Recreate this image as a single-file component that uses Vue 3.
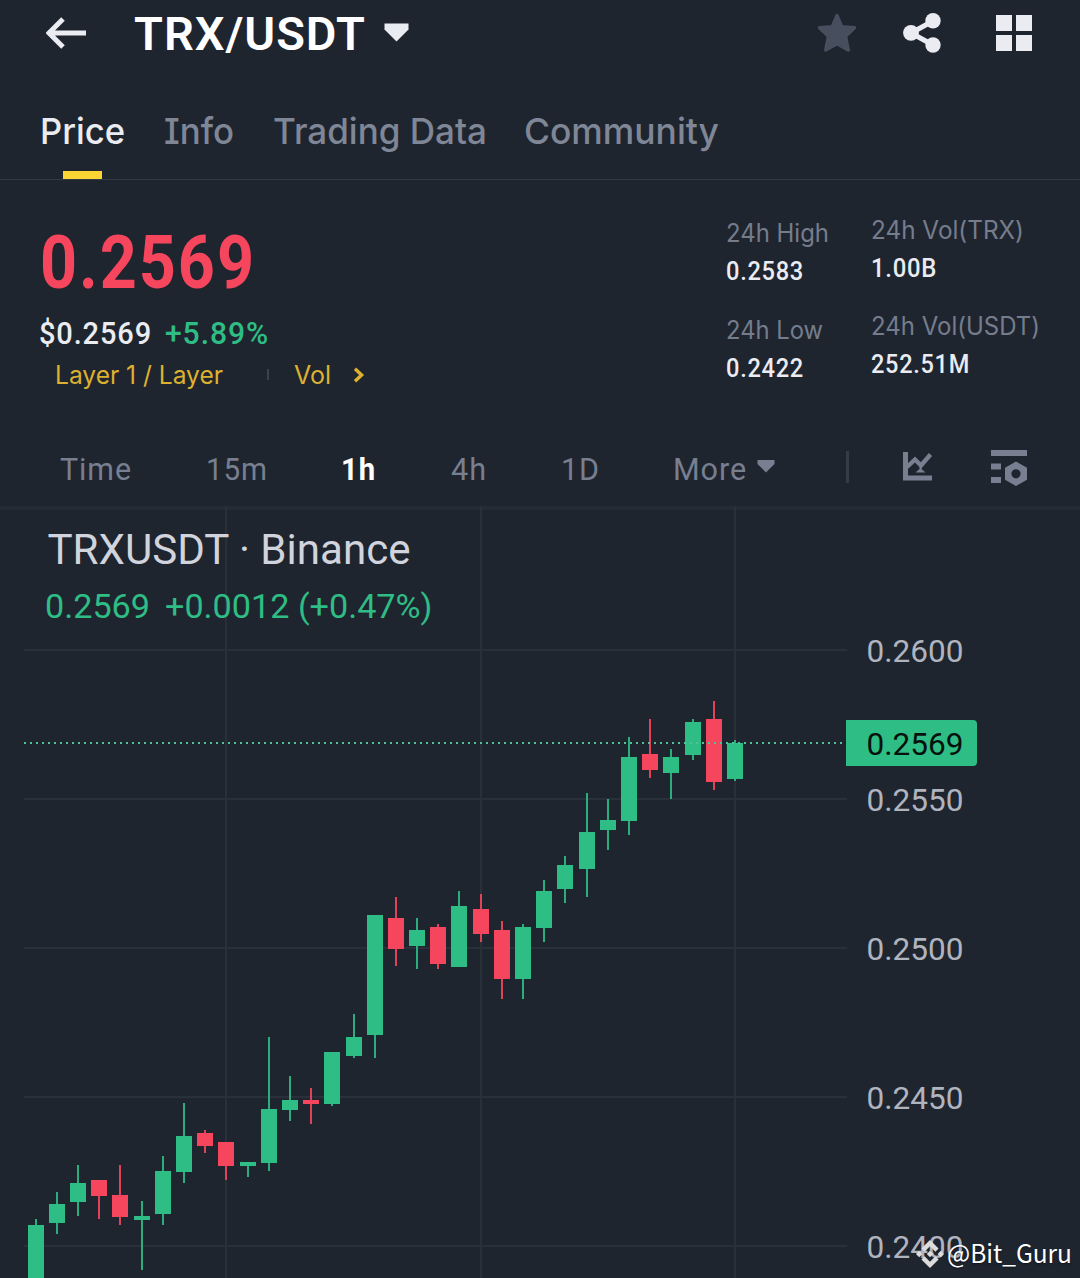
<script setup>
const tabs = [
  { label: 'Price', width: 85, gap: 0, active: true },
  { label: 'Info', width: 70, gap: 39, active: false },
  { label: 'Trading Data', width: 214, gap: 39, active: false },
  { label: 'Community', width: 195, gap: 37, active: false },
]

const stats = [
  [
    { label: '24h High', labelWidth: 103, value: '0.2583', valueWidth: 78 },
    { label: '24h Low', labelWidth: 97, value: '0.2422', valueWidth: 78 },
  ],
  [
    { label: '24h Vol(TRX)', labelWidth: 153, value: '1.00B', valueWidth: 66 },
    { label: '24h Vol(USDT)', labelWidth: 169, value: '252.51M', valueWidth: 99 },
  ],
]

const intervals = [
  { label: 'Time', width: 72, gap: 0 },
  { label: '15m', width: 62, gap: 74 },
  { label: '1h', width: 35, gap: 73 },
  { label: '4h', width: 36, gap: 75 },
  { label: '1D', width: 39, gap: 74 },
  { label: 'More', width: 74, gap: 73 },
].map((item) => ({ ...item, active: item.label === '1h' }))

const levels = [
  { y: 651, label: '0.2600' },
  { y: 800, label: '0.2550' },
  { y: 949, label: '0.2500' },
  { y: 1098, label: '0.2450' },
  { y: 1247, label: '0.2400' },
]
const columns = [226, 481, 735]

// x centre, wick top, body top, body bottom, wick bottom, direction
const candles = [
  [36, 1219, 1225, 1280, 1280, 'up'],
  [57, 1192, 1204, 1223, 1234, 'up'],
  [78, 1165, 1183, 1202, 1216, 'up'],
  [99, 1180, 1180, 1196, 1219, 'down'],
  [120, 1165, 1195, 1217, 1225, 'down'],
  [142, 1201, 1216, 1220, 1270, 'up'],
  [163, 1156, 1171, 1214, 1225, 'up'],
  [184, 1103, 1136, 1172, 1183, 'up'],
  [205, 1130, 1133, 1146, 1153, 'down'],
  [226, 1142, 1142, 1166, 1180, 'down'],
  [248, 1162, 1162, 1166, 1177, 'up'],
  [269, 1037, 1109, 1163, 1171, 'up'],
  [290, 1076, 1100, 1110, 1121, 'up'],
  [311, 1088, 1100, 1104, 1124, 'down'],
  [332, 1052, 1052, 1104, 1106, 'up'],
  [354, 1014, 1037, 1056, 1058, 'up'],
  [375, 915, 915, 1035, 1058, 'up'],
  [396, 897, 918, 949, 966, 'down'],
  [417, 918, 930, 946, 969, 'up'],
  [438, 924, 927, 964, 969, 'down'],
  [459, 891, 906, 967, 967, 'up'],
  [481, 894, 909, 934, 942, 'down'],
  [502, 921, 930, 979, 999, 'down'],
  [523, 924, 927, 979, 999, 'up'],
  [544, 880, 891, 928, 942, 'up'],
  [565, 856, 865, 889, 903, 'up'],
  [587, 793, 832, 869, 897, 'up'],
  [608, 799, 820, 830, 850, 'up'],
  [629, 737, 757, 821, 835, 'up'],
  [650, 719, 754, 770, 778, 'down'],
  [671, 749, 757, 773, 799, 'up'],
  [693, 719, 722, 755, 760, 'up'],
  [714, 701, 719, 782, 790, 'down'],
  [735, 740, 743, 779, 781, 'up'],
]

// Condenses or widens a label so that it fills the given width.
const vFit = {
  mounted(el, { value }) {
    const natural = el.getBoundingClientRect().width
    el.style.width = `${value}px`
    el.style.transform = `scaleX(${value / natural})`
  },
}
</script>

<template>
  <main class="screen">
    <header class="header">
      <svg class="back" width="40" height="32" viewBox="0 0 40 32">
        <path d="M40 16H4M17 2 3 16l14 14" fill="none" stroke="currentColor" stroke-width="5" />
      </svg>
      <h1 class="pair"><span v-fit="232" class="fit">TRX/USDT</span></h1>
      <svg class="caret" width="25" height="20" viewBox="0 0 25 20">
        <path d="M.5 .5h24v6L12.500 18.500 .5 6.500z" fill="currentColor" />
      </svg>
      <svg class="star" width="40" height="42" viewBox="0 0 40 42">
        <path
          d="M20 3.500 24.700 14.600 37.500 15.800 28.600 24.400 31.300 38 20 31.800 8.700 38 11.400 24.400 2.500 15.800 15.300 14.600z"
          fill="currentColor" stroke="currentColor" stroke-width="3.4" stroke-linejoin="round"
        />
      </svg>
      <svg class="share" width="40" height="42" viewBox="0 0 40 42">
        <path d="M31 9 9 21l22 12" fill="none" stroke="currentColor" stroke-width="5" />
        <g fill="currentColor">
          <circle cx="31" cy="8.800" r="7.700" /><circle cx="9" cy="20.800" r="7.900" /><circle cx="31" cy="33" r="7.700" />
        </g>
      </svg>
      <svg class="grid" width="36" height="36" viewBox="0 0 36 36">
        <path d="M0 0h16v16H0zM20 0h16v16H20zM0 20h16v16H0zM20 20h16v16H20z" fill="currentColor" />
      </svg>
    </header>

    <nav class="tabs">
      <a
        v-for="tab in tabs" :key="tab.label" class="tab" :class="{ active: tab.active }"
        :style="{ marginLeft: `${tab.gap}px` }"
      >
        <span v-fit="tab.width" class="fit">{{ tab.label }}</span>
      </a>
    </nav>

    <section class="summary">
      <div class="quote">
        <div class="price"><span v-fit="216" class="fit">0.2569</span></div>
        <div class="change">
          <span v-fit="113" class="fit">$0.2569</span>
          <span v-fit="104" class="fit green">+5.89%</span>
        </div>
        <div class="tags">
          <span v-fit="168" class="fit">Layer 1 / Layer</span>
          <i class="tick"></i>
          <span v-fit="37" class="fit">Vol</span>
          <svg class="chevron" width="12" height="16" viewBox="0 0 12 16">
            <path d="m2 1.800 6.600 6.200L2 14.200" fill="none" stroke="currentColor" stroke-width="3.4" />
          </svg>
        </div>
      </div>
      <div v-for="(column, c) in stats" :key="c" class="stats">
        <dl v-for="item in column" :key="item.label">
          <dt><span v-fit="item.labelWidth" class="fit">{{ item.label }}</span></dt>
          <dd><span v-fit="item.valueWidth" class="fit">{{ item.value }}</span></dd>
        </dl>
      </div>
    </section>

    <div class="toolbar">
      <span
        v-for="item in intervals" :key="item.label" class="interval" :class="{ active: item.active }"
        :style="{ marginLeft: `${item.gap}px` }"
      ><span v-fit="item.width" class="fit">{{ item.label }}</span></span>
      <svg class="more" width="18" height="13" viewBox="0 0 18 13">
        <path d="M.5 0h17v4L9 12.500 .5 4z" fill="currentColor" />
      </svg>
      <i class="divider"></i>
      <svg class="draw" width="30" height="30" viewBox="0 0 30 30">
        <path d="M2.500 0v26H29" fill="none" stroke="currentColor" stroke-width="5" />
        <path d="m4 15 8-7.500 6 6L27.500 2.500" fill="none" stroke="currentColor" stroke-width="4.400" />
        <path d="m12.500 20.500 4-3.500v-4h2v4l4 3.500z" fill="currentColor" />
      </svg>
      <svg class="settings" width="36" height="38" viewBox="0 0 36 38">
        <path d="M0 1h36v6H0zM0 14.500h10v6H0zM0 28h10v6H0z" fill="currentColor" />
        <path
          d="M25 12.500 36 18.700v12L25 37l-11-6.300v-12zM25 20.200a4.600 4.600 0 1 0 0 9.200 4.600 4.600 0 0 0 0-9.200z"
          fill="currentColor" fill-rule="evenodd"
        />
      </svg>
    </div>

    <section class="chart">
      <svg width="1080" height="772" viewBox="0 506 1080 772">
        <rect class="edge" x="0" y="506" width="1080" height="4" />
        <g class="lines">
          <rect v-for="x in columns" :key="x" :x="x - 1" y="506" width="2" height="772" />
          <rect v-for="level in levels" :key="level.y" x="24" :y="level.y - 2" width="823" height="2" />
        </g>
        <text class="symbol" x="47.500" y="563.800" textLength="363" lengthAdjust="spacingAndGlyphs">TRXUSDT · Binance</text>
        <text class="last" x="45" y="618" textLength="105" lengthAdjust="spacingAndGlyphs">0.2569</text>
        <text class="last" x="165" y="618" textLength="267.500" lengthAdjust="spacingAndGlyphs">+0.0012 (+0.47%)</text>
        <g v-for="[x, high, top, bottom, low, side] in candles" :key="x" :class="side">
          <rect class="wick" :x="x - 1" :y="high" width="2" :height="low - high" />
          <rect :x="x - 8" :y="top" width="16" :height="bottom - top" />
        </g>
        <path class="dotted" d="M24 743H846" />
        <text
          v-for="level in levels" :key="level.label" class="axis" x="866.500" :y="level.y + 11"
          textLength="97" lengthAdjust="spacingAndGlyphs"
        >{{ level.label }}</text>
        <path class="badge" d="M846 720h127a4 4 0 0 1 4 4v38a4 4 0 0 1-4 4H846z" />
        <text class="axis current" x="866.500" y="755" textLength="97" lengthAdjust="spacingAndGlyphs">0.2569</text>
      </svg>
      <div class="watermark">
        <svg width="28" height="28" viewBox="0 0 24 24">
          <path
            fill="currentColor"
            d="M16.624 13.920l2.718 2.716-7.353 7.353-7.353-7.352 2.717-2.717 4.636 4.660zM21.261 9.284 24 12l-2.715 2.716L18.568 12zM11.989 9.285l2.716 2.691-2.716 2.718L9.272 12zM2.716 9.284 5.409 12l-2.692 2.692L0 12zM11.989.012l7.353 7.329-2.718 2.715-4.635-4.636-4.636 4.660-2.717-2.716z"
          />
        </svg>
        <span v-fit="125" class="fit">@Bit_Guru</span>
      </div>
    </section>
  </main>
</template>

<style>
body {
  margin: 0;
  background: #1f252f;
}
</style>

<style scoped>
.screen {
  display: flex;
  flex-direction: column;
  width: 1080px;
  height: 1278px;
  overflow: hidden;
  background: #1f252f;
  color: #eaecf2;
  font-family: Roboto, "Liberation Sans", sans-serif;
}
svg {
  display: block;
  flex: none;
}
.fit {
  display: inline-block;
  flex: none;
  white-space: nowrap;
  transform-origin: 0 50%;
}

.header {
  display: flex;
  align-items: center;
  height: 65px;
  padding-left: 46px;
  color: #eaecf2;
}
.pair {
  display: flex;
  margin: 3px 0 0 48px;
  color: #fff;
  font-size: 47px;
  line-height: 56px;
  font-weight: 650;
  letter-spacing: 0.02em;
}
.caret {
  margin-left: 18px;
}
.star {
  margin-left: 408px;
  color: #474f5e;
}
.share {
  margin-left: 45px;
}
.grid {
  margin: 0 0 0 54px;
}

.tabs {
  display: flex;
  box-sizing: border-box;
  height: 115px;
  padding: 47px 0 0 40px;
  border-bottom: 1px solid #323943;
}
.tab {
  position: relative;
  color: #7f8797;
  font-family: Inter, sans-serif;
  font-size: 36px;
  line-height: 38px;
  font-weight: 500;
  font-feature-settings: "cv08";
}
.tab.active {
  color: #eaecf2;
}
.tab.active::after {
  content: "";
  position: absolute;
  left: 23px;
  top: 59px;
  width: 39px;
  height: 8px;
  background: #fcd535;
}

.summary {
  display: flex;
  height: 250px;
}
.quote {
  width: 726px;
  padding-top: 43px;
}
.price {
  height: 80px;
  padding-left: 40px;
  color: #f6465d;
  font-size: 74px;
  line-height: 80px;
  font-weight: 700;
  letter-spacing: 0.03em;
}
.change {
  display: flex;
  gap: 13px;
  margin-top: 11px;
  padding-left: 39px;
  font-size: 31px;
  line-height: 40px;
  font-weight: 500;
  letter-spacing: 0.03em;
}
.green {
  color: #2ebd85;
}
.tags {
  display: flex;
  align-items: center;
  height: 30px;
  margin-top: 6px;
  padding-left: 55px;
  color: #ddb12f;
  font-family: Inter, sans-serif;
  font-size: 25px;
  line-height: 30px;
}
.tick {
  width: 2px;
  height: 11px;
  margin: 0 25px 2px 44px;
  background: #3a424e;
}
.chevron {
  margin: -1px 0 0 22px;
}
.stats {
  display: flex;
  flex-direction: column;
  gap: 21px;
  width: 145px;
  padding-top: 34px;
}
.stats + .stats {
  padding-top: 31px;
}
.stats + .stats dl {
  margin-top: -0.5px;
}
dl {
  margin: 0;
}
dt,
dd {
  display: flex;
  height: 38px;
  margin: 0;
  line-height: 38px;
}
dt {
  color: #757d8d;
  font-family: Inter, sans-serif;
  font-size: 25px;
}
dd {
  font-size: 25.5px;
  font-weight: 500;
  letter-spacing: 0.03em;
}

.toolbar {
  display: flex;
  align-items: center;
  height: 76px;
  padding-left: 60px;
  color: #777f90;
}
.interval {
  display: flex;
  margin-top: 4px;
  font-size: 31px;
  line-height: 38px;
  letter-spacing: 0.03em;
}
.interval.active {
  color: #fff;
  font-weight: 700;
}
.more {
  margin: -4px 0 0 10px;
}
.divider {
  width: 3px;
  height: 32px;
  margin: -2px 0 0 71px;
  background: #353c48;
}
.draw {
  margin: -2px 0 0 54px;
}
.settings {
  margin: -1px 0 0 58px;
}

.chart {
  position: relative;
  height: 772px;
}
.lines {
  fill: #2a303a;
}
.edge {
  fill: #252b36;
}
.symbol {
  fill: #d1d4dc;
  font-size: 42.5px;
}
.last {
  fill: #2ebd85;
  font-size: 34px;
}
.up {
  fill: #2ebd85;
}
.down {
  fill: #f6465d;
}
.wick {
  opacity: 0.9;
}
.dotted {
  stroke: #4fc29a;
  stroke-width: 2;
  stroke-dasharray: 2 4;
}
.axis {
  fill: #b0b4be;
  font-size: 31.5px;
}
.badge {
  fill: #2ebd85;
}
.current {
  fill: #06110c;
}
.watermark {
  position: absolute;
  right: 8px;
  bottom: 8px;
  display: flex;
  align-items: center;
  gap: 3px;
  color: #fff;
  font-family: "Noto Sans CJK SC", sans-serif;
  font-size: 25px;
  line-height: 36px;
  text-shadow: 0 1px 2px #0008;
}
.watermark .fit {
  margin-top: -3px;
}
.watermark svg {
  color: #dcdcdc;
}
</style>
